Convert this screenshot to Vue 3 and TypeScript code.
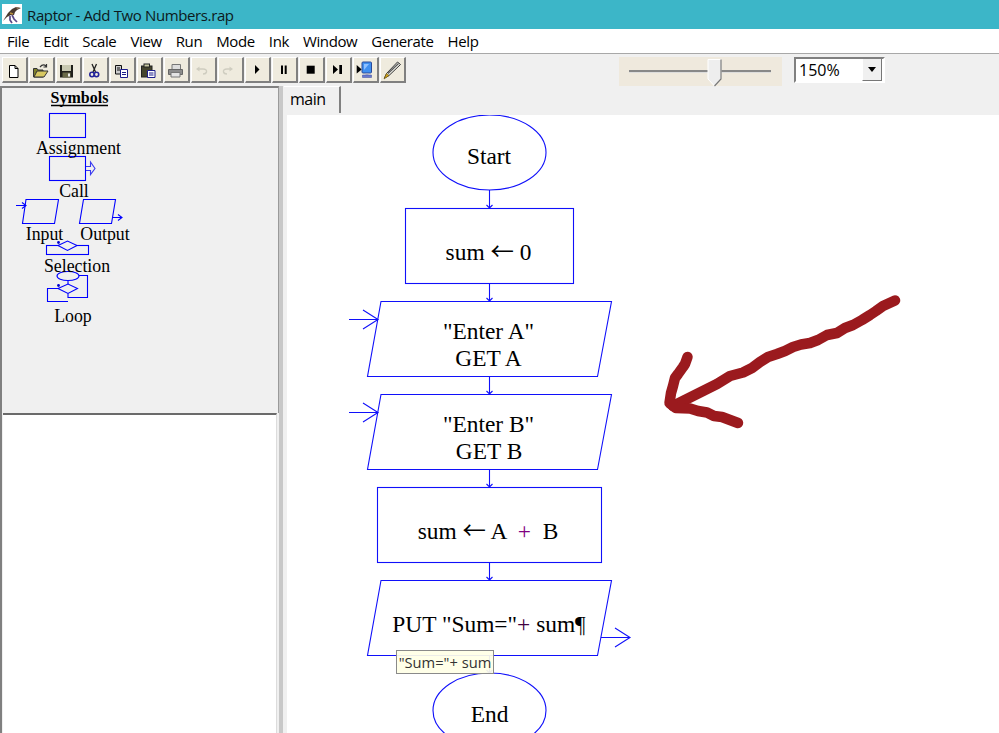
<script setup lang="ts">
const menus: string[] = ['File', 'Edit', 'Scale', 'View', 'Run', 'Mode', 'Ink', 'Window', 'Generate', 'Help']
const tools: string[] = ['new', 'open', 'save', 'cut', 'copy', 'paste', 'print', 'undo', 'redo', 'play', 'pause', 'stop', 'step', 'net', 'pen']
const arrows: number[][] = [[190, 208], [283.5, 301], [376.5, 394], [469.5, 487], [562.5, 580], [655.5, 673]]
</script>

<template>
  <div class="app">
    <header class="title">
      <svg class="logo" width="20" height="20" viewBox="0 0 20 20">
        <rect width="20" height="20" fill="#fff" />
        <path d="M1 17 L6 9 L10 5 L14 3 L19 4 L15 6 L13 8 L12 11 L9 11 L5 13 Z" fill="#4a3a30" />
        <path d="M14 3 L18 4 L15 5 Z" fill="#9a7a60" />
        <path d="M10 11 L12 15 L15 18 M8 12 L8 16 L10 19" stroke="#5a4a88" stroke-width="1.7" fill="none" />
        <path d="M8 9 L11 10" stroke="#b89040" stroke-width="1.500" />
      </svg>
      <span>Raptor - Add Two Numbers.rap</span>
    </header>

    <nav class="menu">
      <span v-for="m in menus" :key="m">{{ m }}</span>
    </nav>

    <div class="toolbar">
      <div class="tools">
        <button v-for="t in tools" :key="t" class="tool" type="button">
          <svg width="20" height="20" viewBox="0 0 20 20">
            <template v-if="t === 'new'">
              <path d="M5.500 5.500 H11 L14 8.500 V17.500 H5.500 Z" fill="#fff" stroke="#000" />
              <path d="M11 5.500 V8.500 H14" fill="none" stroke="#000" />
            </template>
            <template v-else-if="t === 'open'">
              <path d="M2.500 8.500 H6 L7 10 H12 V17 H2.500 Z" fill="#7e7e28" stroke="#333" />
              <path d="M3 17 L6 11 H17 L13 17 Z" fill="#d8c860" stroke="#333" />
              <path d="M9 7 Q12 3.500 15 6 M15.500 4 V7 H12.500" fill="none" stroke="#333" stroke-width="1.200" />
            </template>
            <template v-else-if="t === 'save'">
              <rect x="2" y="5" width="13" height="12.500" fill="#20201a" />
              <rect x="4" y="5" width="9" height="6" fill="#c8c8b0" />
              <rect x="4.500" y="12.500" width="8" height="5" fill="#6a6a48" />
              <rect x="10" y="13.500" width="2" height="3" fill="#eee" />
            </template>
            <template v-else-if="t === 'cut'">
              <path d="M7 4 L10.500 12 M11.500 4 L8 12" stroke="#222" stroke-width="1.300" fill="none" />
              <circle cx="7" cy="14.500" r="2.200" fill="none" stroke="#24249a" stroke-width="1.600" />
              <circle cx="11.500" cy="14.500" r="2.200" fill="none" stroke="#24249a" stroke-width="1.600" />
            </template>
            <template v-else-if="t === 'copy'">
              <path d="M3.500 5.500 H9.500 V14 H3.500 Z" fill="#ccc" stroke="#111" />
              <path d="M5 8 H8 M5 10 H8" stroke="#111" />
              <path d="M8.500 9.500 H15.500 V17.500 H8.500 Z" fill="#fff" stroke="#1c1c8a" />
              <path d="M10 12.500 H14 M10 14.500 H14" stroke="#1c1c8a" />
            </template>
            <template v-else-if="t === 'paste'">
              <rect x="2.500" y="6" width="10.500" height="11" fill="#44442c" stroke="#222" />
              <rect x="5" y="4" width="5.500" height="3" fill="#c8c8a0" stroke="#222" />
              <path d="M8.500 10.500 H16 V17.500 H8.500 Z" fill="#fff" stroke="#1c1c8a" />
              <path d="M10 13 H14.500 M10 15 H14.500" stroke="#1c1c8a" />
            </template>
            <template v-else-if="t === 'print'">
              <path d="M6 4.500 H14.500 V9.500 H6 Z" fill="#ddd" stroke="#777" />
              <path d="M2.500 9.500 H16.500 V14.500 H2.500 Z" fill="#8c8c8c" stroke="#666" />
              <path d="M5 12.500 H14 V17 H5 Z" fill="#e4e4e4" stroke="#777" />
            </template>
            <template v-else-if="t === 'undo'">
              <path d="M5 9 H10 Q14 9 13.500 12 Q13 14 10 14" fill="none" stroke="#cfcdc0" stroke-width="1.400" />
              <path d="M3 9 L6.500 6.500 V11.500 Z" fill="#cfcdc0" />
            </template>
            <template v-else-if="t === 'redo'">
              <path d="M11 9 H7 Q3 9 3.500 12 Q4 14 7 14" fill="none" stroke="#cfcdc0" stroke-width="1.400" />
              <path d="M13 9 L9.500 6.500 V11.500 Z" fill="#cfcdc0" />
            </template>
            <path v-else-if="t === 'play'" d="M8 5 L12.500 9.500 L8 14 Z" fill="#000" />
            <path v-else-if="t === 'pause'" d="M7 5.500 H9 V14 H7 Z M10.700 5.500 H12.700 V14 H10.700 Z" fill="#000" />
            <rect v-else-if="t === 'stop'" x="5.700" y="5.700" width="8" height="8" fill="#000" />
            <path v-else-if="t === 'step'" d="M5 5 L10 9.500 L5 14 Z M11.300 5 H14 V14 H11.300 Z" fill="#000" />
            <template v-else-if="t === 'net'">
              <path d="M1.700 5 L6.700 9.500 L1.700 13.500 Z" fill="#000" />
              <rect x="7" y="2" width="9.500" height="11" rx="1" fill="#3f8ff0" stroke="#2a4a9a" />
              <path d="M9 4 L14 4 L9 10 Z" fill="#8ec0ff" />
              <path d="M7.500 15 H16.500 V17.500 H7.500 Z" fill="#6a7ad0" stroke="#3a4a9a" stroke-width=".5" />
              <path d="M10.500 13 H13.500 V15 H10.500 Z" fill="#9aa0c0" />
            </template>
            <template v-else>
              <path d="M2.500 18 L4.500 13.500 L15.500 2 L18.500 4.500 L7 15.500 Z" fill="#f0f0e8" stroke="#333" />
              <path d="M2 19 L4.500 13.500 L7 15.500 Z" fill="#d8a818" stroke="#5a4a10" stroke-width=".6" />
              <path d="M6 13.500 L16.500 3.500" stroke="#555" stroke-width="1.200" />
            </template>
          </svg>
        </button>
      </div>
      <div class="zoom">
        <div class="slider">
          <div class="track"></div>
          <svg class="thumb" width="15" height="28" viewBox="0 0 15 28">
            <path d="M1 .5 H14 V20 L7.500 27 L1 20 Z" fill="#eee" stroke="#fff" />
            <path d="M14 .5 V20 L7.500 27" fill="none" stroke="#777" stroke-width="1.200" />
          </svg>
        </div>
        <div class="combo">
          <span class="value">150%</span>
          <span class="drop"><i></i></span>
        </div>
      </div>
    </div>

    <main class="work">
      <aside class="left">
        <section class="symbols">
          <svg width="275" height="325" viewBox="2 88 275 325">
            <text x="79.500" y="103" class="sym-head">Symbols</text>
            <line x1="51" y1="105.500" x2="108" y2="105.500" stroke="#000" stroke-width="1.500" />
            <g fill="none" stroke="#0000ff" stroke-width="1.100">
              <rect x="49.500" y="113.500" width="36" height="24" />
              <rect x="49.500" y="156.500" width="36" height="24" />
              <path d="M86 166.500 H90.500 V162 L95 168.500 L90.500 174.500 V170.500 H86" stroke="#3a3af0" />
              <path d="M26 199.500 H58.500 L54.500 223.500 H22.500 Z" />
              <path d="M16 205.500 H26 M22 202.500 L26 205.500 L22 208.500" />
              <path d="M83.500 199.500 H115.500 L111.500 223.500 H79.500 Z" />
              <path d="M112 217.500 H122 M118 214.500 L122 217.500 L118 220.500" />
              <rect x="46.500" y="245.500" width="42" height="9" />
              <path d="M58 245.500 L67.500 241 L77 245.500 L67.500 250.500 Z" fill="#f0f0f0" />
              <ellipse cx="68" cy="276" rx="11" ry="4.500" />
              <path d="M68 280.500 V284 M79 275.500 H87.500 V297.500 H68 V293.500" />
              <path d="M58 288.500 L68 284 L77.500 288.500 L68 293.500 Z" />
              <path d="M58 288.500 H47.500 V301.500 H68" />
            </g>
            <circle cx="58.500" cy="242.500" r="1.400" fill="#0000d0" />
            <circle cx="58.500" cy="285.500" r="1.400" fill="#0000d0" />
            <g class="sym-label">
              <text x="78.500" y="154">Assignment</text>
              <text x="74" y="197">Call</text>
              <text x="44.500" y="240">Input</text>
              <text x="105" y="240">Output</text>
              <text x="77" y="272">Selection</text>
              <text x="73" y="322">Loop</text>
            </g>
          </svg>
        </section>
        <section class="list"></section>
      </aside>
      <div class="splitter"></div>
      <section class="right">
        <div class="tabs"><div class="tab">main</div></div>
        <div class="canvas">
          <svg width="712" height="618" viewBox="287 115 712 618">
            <g fill="none" stroke="#1010fa" stroke-width="1.100">
              <ellipse cx="489.500" cy="152.500" rx="56.500" ry="37.500" />
              <rect x="405.500" y="208.500" width="168" height="75" />
              <path d="M381 301.500 H611.500 L597.500 376.500 H367.500 Z" />
              <path d="M381 394.500 H611.500 L597.500 469.500 H367.500 Z" />
              <rect x="377.500" y="487.500" width="224" height="75" />
              <path d="M381 580.500 H611.500 L597.500 655.500 H367.500 Z" />
              <ellipse cx="489.500" cy="710.500" rx="56.500" ry="37.500" />
              <g v-for="a in arrows" :key="a[0]">
                <path :d="`M489.500 ${a[0]} V${a[1]} M486.500 ${a[1] - 3} L489.500 ${a[1]} L492.500 ${a[1] - 3}`" />
              </g>
              <path d="M349 319.500 H378 M363 310 L378 319.500 L363 329" />
              <path d="M349 412.500 H378 M363 403 L378 412.500 L363 422" />
              <path d="M601 637.500 H630 M615 628 L630 637.500 L615 647" />
            </g>
            <g class="flow-text">
              <text x="489" y="164">Start</text>
              <text x="488.500" y="260">sum <tspan class="arr">←</tspan> 0</text>
              <text x="488.500" y="339">"Enter A"</text>
              <text x="488.500" y="366">GET A</text>
              <text x="488.500" y="432">"Enter B"</text>
              <text x="489" y="459">GET B</text>
              <text x="488" y="539">sum <tspan class="arr">←</tspan> A <tspan fill="#800080">&#160;+&#160;</tspan> B</text>
              <text x="489" y="632">PUT "Sum="<tspan fill="#400040">+</tspan> sum¶</text>
              <text x="489.500" y="722">End</text>
            </g>
            <g fill="none" stroke="#9b1a1e" stroke-width="10.500" stroke-linecap="round" stroke-linejoin="round">
              <path d="M895 300.500 L883 306 L876 311 L870 315 L862 320 L853 325 L845 328 L837 333 L827 335 L818 340 L810 343 L801 344.500 L793 347 L785 351 L777 354 L768 357 L760 362 L752 368 L743 372.500 L730 376 L717 384 L703 391 L687 399 L673 406" />
              <path d="M687.500 357 L685 364 L683 367 L678 374 L675 378 L673 386 L671 393 L669.500 403 L676 408 L690 408.500 L698 411 L707 412.500 L714 416 L722 417 L738 423" />
            </g>
          </svg>
          <div class="tooltip">"Sum="+ sum</div>
        </div>
      </section>
    </main>
  </div>
</template>

<style>
html, body { margin: 0; padding: 0; overflow: hidden; background: #f0f0f0; }
</style>

<style scoped>
.app { width: 999px; height: 733px; display: flex; flex-direction: column; overflow: hidden; background: #f0f0f0; font-family: "Open Sans", "Noto Sans", sans-serif; color: #000; }
.title { height: 29px; background: #3cb6c8; display: flex; align-items: center; gap: 5px; padding-left: 2px; font-size: 15px; letter-spacing: -0.38px; color: #0c1a20; box-sizing: border-box; }
.logo { flex: none; margin-top: -1px; }
.menu { height: 25px; background: #fff; display: flex; gap: 14px; padding-left: 7px; align-items: center; font-size: 15px; letter-spacing: -0.38px; border-bottom: 1px solid #a8a8a8; box-sizing: border-box; }
.toolbar { height: 32px; display: flex; align-items: flex-start; box-sizing: border-box; padding: 3px 0 0 2px; background: #f0f0f0; }
.tools { display: flex; gap: 1px; width: 617px; }
.tool { width: 26px; height: 26px; padding: 0; background: #efebde; border-style: solid; border-width: 1px 2px 2px 1px; border-color: #fff #808080 #808080 #fff; display: flex; align-items: center; justify-content: flex-start; box-sizing: border-box; }
.tool svg { margin-left: 1px; }
.zoom { display: flex; gap: 12px; }
.slider { position: relative; width: 163px; height: 29px; background: #efe9dd; }
.track { position: absolute; left: 10px; right: 11px; top: 13px; height: 2px; background: #888; border-bottom: 1px solid #ddd; }
.thumb { position: absolute; left: 88px; top: 2px; }
.combo { width: 91px; height: 26px; box-sizing: border-box; background: #fff; border: 2px solid; border-color: #808080 #fff #fff #808080; display: flex; justify-content: space-between; font-size: 16px; }
.value { padding-left: 3px; line-height: 23px; }
.drop { width: 20px; margin-right: 1px; background: #f0f0f0; border-left: 1px solid #fff; border-right: 1px solid #777; border-bottom: 1px solid #777; display: flex; align-items: center; justify-content: center; box-sizing: border-box; }
.drop i { border: 4px solid transparent; border-top: 5px solid #000; border-bottom: 0; }
.work { flex: 1; display: flex; min-height: 0; }
.left { width: 279px; display: flex; flex-direction: column; flex: none; box-sizing: border-box; border-left: 2px solid #808080; }
.symbols { height: 327px; box-sizing: border-box; background: #f0f0f0; border-top: 2px solid #808080; border-right: 1px solid #9a9a9a; overflow: hidden; flex: none; }
.symbols svg { display: block; }
.sym-head { font: bold 16px "Liberation Serif", serif; text-anchor: middle; }
.sym-label { font: 17.800px "Liberation Serif", serif; text-anchor: middle; }
.list { flex: 1; margin: 0 2px 0 1px; background: #fff; border-top: 2px solid #6a6a6a; border-right: 1px solid #dcdcdc; }
.splitter { width: 4px; flex: none; background: #c8c8c8; }
.right { flex: 1; display: flex; flex-direction: column; min-width: 0; }
.tabs { height: 29px; flex: none; padding-left: 1px; box-sizing: border-box; background: #f0f0f0; }
.tab { width: 57px; height: 27px; box-sizing: border-box; padding: 0 0 0 6px; font-size: 16px; letter-spacing: -0.5px; background: #f0f0f0; border-top: 1px solid #fff; border-right: 2px solid #808080; line-height: 24px; }
.canvas { flex: 1; margin-left: 4px; background: #fff; position: relative; overflow: hidden; }
.canvas svg { display: block; }
.flow-text { font: 23.400px "Liberation Serif", serif; text-anchor: middle; fill: #000; }
.arr { font-family: "Noto Sans CJK SC", serif; font-size: 23.400px; }
.tooltip { position: absolute; left: 109px; top: 535px; width: 98px; height: 24px; box-sizing: border-box; background: rgba(255, 255, 230, 0.92); border: 1px solid #8a8a8a; font-size: 14.700px; line-height: 22px; text-align: center; white-space: nowrap; color: #333; }
</style>
